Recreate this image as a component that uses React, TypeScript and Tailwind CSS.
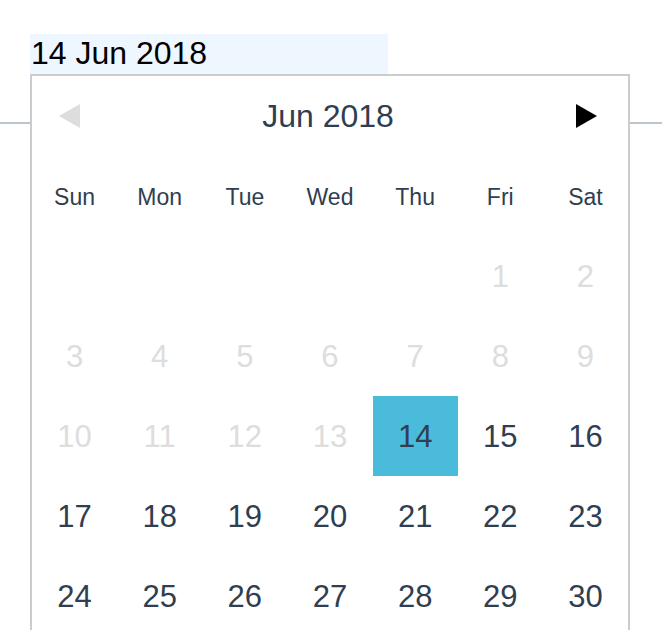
import React from 'react';

const weekdays = ['Sun', 'Mon', 'Tue', 'Wed', 'Thu', 'Fri', 'Sat'];

type Day = { n: number | null; muted?: boolean; selected?: boolean };

const buildDays = (): Day[] => {
    const days: Day[] = [];
    for (let i = 0; i < 5; i++) days.push({ n: null });
    for (let d = 1; d <= 30; d++) {
        days.push({ n: d, muted: d < 14, selected: d === 14 });
    }
    return days;
};

const App: React.FC = () => {
    const days = buildDays();

    return (
        <div className="min-h-screen bg-white pt-[34px] font-['Liberation_Sans',Arial,sans-serif]">
            <div className="relative ml-[30px] w-[358px]">
                <div className="h-[40px] bg-[#eef6ff] pl-[1px] text-[32px] leading-[38px] text-black">
                    14 Jun 2018
                </div>
                <div className="absolute left-0 top-full z-10 w-[600px] border-2 border-[#cccccc] bg-white text-[#2f3e50]">
                    <div className="flex h-[80px] items-center justify-between pl-[27px] pr-[31px]">
                        <svg width="21" height="24" viewBox="0 0 21 24" aria-label="Previous month">
                            <polygon points="21,0 21,24 0,12" fill="#dddddd" />
                        </svg>
                        <span className="text-[32px]">Jun 2018</span>
                        <svg width="21" height="24" viewBox="0 0 21 24" aria-label="Next month">
                            <polygon points="0,0 0,24 21,12" fill="#000000" />
                        </svg>
                    </div>
                    <div className="grid grid-cols-7">
                        {weekdays.map(w => (
                            <div key={w} className="flex h-[80px] items-center justify-center pt-[3px] text-[23px]">
                                {w}
                            </div>
                        ))}
                        {days.map((d, i) => (
                            <div
                                key={i}
                                className={`flex h-[80px] items-center justify-center pt-[3px] text-[31px] ${
                                    d.selected ? 'bg-[#4bbbdb]' : ''
                                } ${d.muted ? 'text-[#dddddd]' : ''}`}
                            >
                                {d.n}
                            </div>
                        ))}
                    </div>
                </div>
            </div>
            <div className="mt-[48px] h-[2px] bg-[#bcc6cf]" />
        </div>
    );
};

export default App;
